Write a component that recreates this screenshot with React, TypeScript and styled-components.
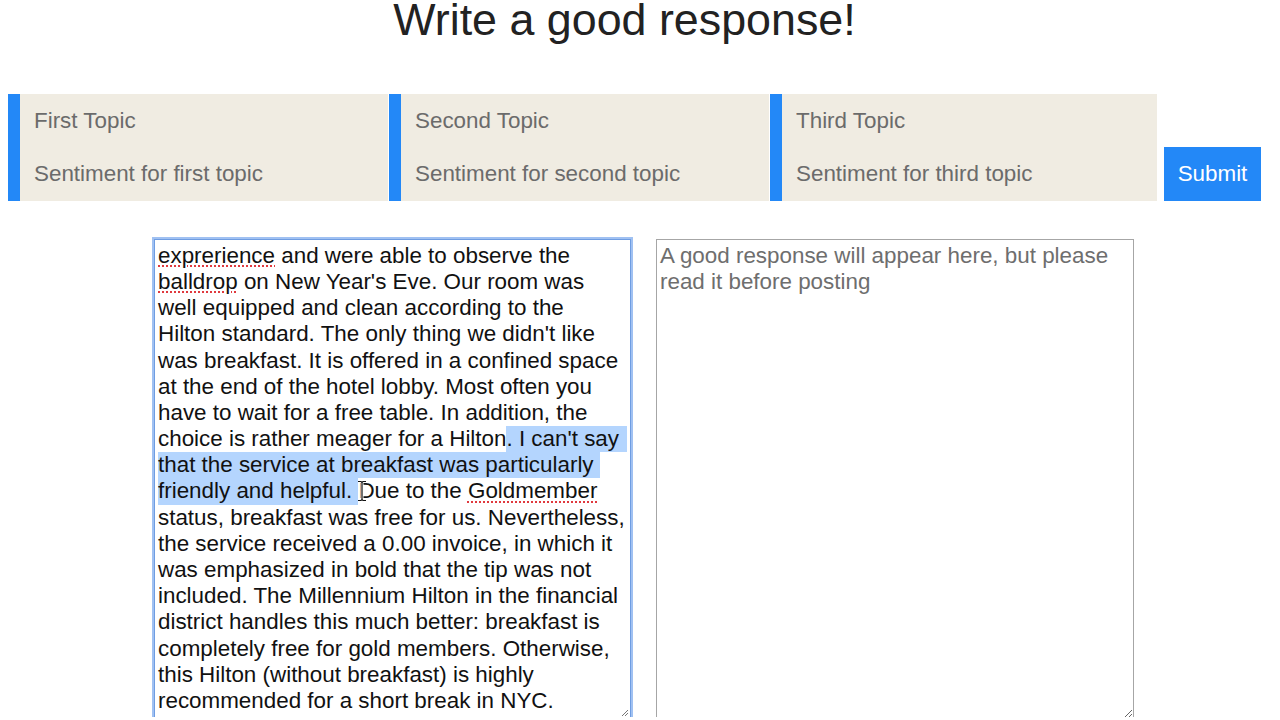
import React from "react";
import styled, { createGlobalStyle } from "styled-components";

const GlobalStyle = createGlobalStyle`
  html, body {
    margin: 0;
    padding: 0;
    background: #fff;
    font-family: "Liberation Sans", Arial, sans-serif;
    overflow: hidden;
  }
`;

const Page = styled.div`
  padding: 0 8px;
  height: 720px;
  box-sizing: border-box;
`;

const Title = styled.h1`
  margin: -3px 0 0;
  padding-right: 31px;
  text-align: center;
  font-size: 44.8px;
  line-height: 44.8px;
  font-weight: 400;
  color: #222;
`;

const TopicRow = styled.form`
  display: flex;
  align-items: flex-end;
  gap: 1px;
  margin-top: 52px;
`;

const Card = styled.div<{ $width: number }>`
  display: flex;
  flex-direction: column;
  width: ${(p) => p.$width}px;
  box-sizing: border-box;
  border-left: 12px solid #2388f7;
  background: #f0ece2;
`;

const TopicInput = styled.input`
  height: 53.5px;
  box-sizing: border-box;
  padding: 0 14px;
  border: none;
  outline: none;
  background: transparent;
  font-family: "Liberation Sans", Arial, sans-serif;
  font-size: 22.4px;
  color: #333;

  &::placeholder {
    color: #6b6b6b;
  }
`;

const SubmitButton = styled.button`
  margin-left: 6px;
  width: 97px;
  height: 54px;
  border: none;
  background: #2388f7;
  color: #fff;
  font-family: "Liberation Sans", Arial, sans-serif;
  font-size: 22.4px;
  cursor: pointer;
`;

const Boxes = styled.div`
  display: flex;
  align-items: flex-start;
  justify-content: center;
  gap: 25px;
  margin-top: 38px;
  padding-left: 8px;
`;

const Editor = styled.div`
  position: relative;
  width: 477px;
  height: 480px;
  box-sizing: border-box;
  padding: 3px 3px 0;
  border: 1px solid #6f9de2;
  box-shadow: 0 0 0 2px rgba(128, 172, 238, 0.75);
  overflow: hidden;
  font-size: 22.4px;
  line-height: 26.2px;
  color: #111;
`;

const Line = styled.div`
  display: flex;
  white-space: pre;
  height: 26.2px;
`;

const Selected = styled.span<{ $fill?: boolean }>`
  background: #b4d5fe;
  ${(p) => (p.$fill ? "flex: 1;" : "")}
`;

const Misspelled = styled.span`
  text-decoration: underline dotted #e0393e;
  text-decoration-thickness: 2px;
  text-underline-offset: 3px;
`;

const Cursor = styled.svg`
  position: absolute;
  left: 201px;
  top: 240px;
`;

const Grip = styled.svg`
  position: absolute;
  right: 1px;
  bottom: 1px;
`;

const Output = styled.textarea`
  display: block;
  width: 478px;
  height: 480px;
  box-sizing: border-box;
  padding: 3px 3px 0;
  margin: 0;
  border: 1px solid #a6a6a6;
  outline: none;
  font-family: "Liberation Sans", Arial, sans-serif;
  font-size: 22.4px;
  line-height: 26.2px;
  color: #111;

  &::placeholder {
    color: #6e6e6e;
  }
`;

const topics = [
  { name: "First Topic", sentiment: "Sentiment for first topic", width: 380 },
  { name: "Second Topic", sentiment: "Sentiment for second topic", width: 380 },
  { name: "Third Topic", sentiment: "Sentiment for third topic", width: 387 },
];

const plainLines = [
  "well equipped and clean according to the",
  "Hilton standard. The only thing we didn't like",
  "was breakfast. It is offered in a confined space",
  "at the end of the hotel lobby. Most often you",
  "have to wait for a free table. In addition, the",
];

const tailLines = [
  "status, breakfast was free for us. Nevertheless,",
  "the service received a 0.00 invoice, in which it",
  "was emphasized in bold that the tip was not",
  "included. The Millennium Hilton in the financial",
  "district handles this much better: breakfast is",
  "completely free for gold members. Otherwise,",
  "this Hilton (without breakfast) is highly",
  "recommended for a short break in NYC.",
];

export default function App() {
  return (
    <Page>
      <GlobalStyle />
      <Title>Write a good response!</Title>

      <TopicRow onSubmit={(e) => e.preventDefault()}>
        {topics.map((t) => (
          <Card key={t.name} $width={t.width}>
            <TopicInput placeholder={t.name} />
            <TopicInput placeholder={t.sentiment} />
          </Card>
        ))}
        <SubmitButton type="submit">Submit</SubmitButton>
      </TopicRow>

      <Boxes>
        <Editor>
          <Line>
            <Misspelled>exprerience</Misspelled> and were able to observe the
          </Line>
          <Line>
            <Misspelled>balldrop</Misspelled> on New Year's Eve. Our room was
          </Line>
          {plainLines.map((l) => (
            <Line key={l}>{l}</Line>
          ))}
          <Line>
            choice is rather meager for a Hilton
            <Selected $fill>. I can't say </Selected>
          </Line>
          <Line>
            <Selected>that the service at breakfast was particularly </Selected>
          </Line>
          <Line>
            <Selected>friendly and helpful. </Selected>Due to the{" "}
            <Misspelled>Goldmember</Misspelled>
          </Line>
          {tailLines.map((l) => (
            <Line key={l}>{l}</Line>
          ))}

          <Cursor width="12" height="22" viewBox="0 0 12 22">
            <path
              d="M2 1.5h3l1 1 1-1h3M6 2.5v17M2 20.5h3l1-1 1 1h3"
              fill="none"
              stroke="#fff"
              strokeWidth="3"
            />
            <path
              d="M2 1.5h3l1 1 1-1h3M6 2.5v17M2 20.5h3l1-1 1 1h3"
              fill="none"
              stroke="#111"
              strokeWidth="1.2"
            />
          </Cursor>
          <Grip width="10" height="10" viewBox="0 0 10 10">
            <path d="M9 3L3 9M9 6L6 9" stroke="#777" strokeWidth="1" />
          </Grip>
        </Editor>

        <Output
          readOnly
          placeholder="A good response will appear here, but please read it before posting"
        />
      </Boxes>
    </Page>
  );
}
